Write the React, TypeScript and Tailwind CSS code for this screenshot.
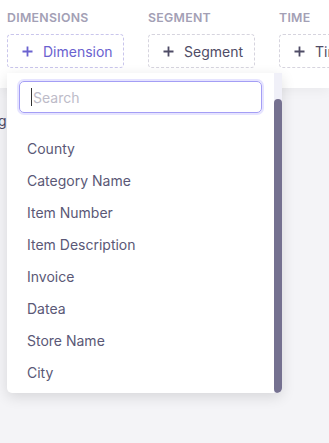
import React from "react";

const items = [
  "County",
  "Category Name",
  "Item Number",
  "Item Description",
  "Invoice",
  "Datea",
  "Store Name",
  "City",
];

function Plus({ className }: { className: string }) {
  return (
    <svg width="11" height="11" viewBox="0 0 11 11" className={className}>
      <path d="M5.5 0.5v10M0.5 5.5h10" stroke="currentColor" strokeWidth="1.8" fill="none" />
    </svg>
  );
}

export default function App() {
  return (
    <div
      className="relative w-[329px] h-[443px] overflow-hidden bg-[#f4f4f7]"
      style={{ fontFamily: "Inter, 'Noto Sans', sans-serif" }}
    >
      <div className="h-[88px] bg-white shadow-[0_4px_10px_rgba(0,0,0,0.04)] flex gap-[24px] pl-[7px] pt-[10px]">
        <div className="flex flex-col gap-[8px]">
          <div className="text-[12.3px] font-semibold text-[#a3a0b5] tracking-[0.3px] leading-[16px]">DIMENSIONS</div>
          <div className="h-[34px] w-[117px] border border-dashed border-[#c9c5ec] rounded-[4px] flex items-center pl-[14px] gap-[10px] text-[#6a62cf] text-[14px]">
            <Plus className="text-[#6a62cf]" />
            <span>Dimension</span>
          </div>
        </div>
        <div className="flex flex-col gap-[8px]">
          <div className="text-[12.3px] font-semibold text-[#a3a0b5] tracking-[0.3px] leading-[16px]">SEGMENT</div>
          <div className="h-[34px] w-[107px] border border-dashed border-[#d6d4de] rounded-[4px] flex items-center pl-[14px] gap-[10px] text-[#4f4c66] text-[14px]">
            <Plus className="text-[#4f4c66]" />
            <span>Segment</span>
          </div>
        </div>
        <div className="flex flex-col gap-[8px]">
          <div className="text-[12.3px] font-semibold text-[#a3a0b5] tracking-[0.3px] leading-[16px]">TIME</div>
          <div className="h-[34px] w-[90px] border border-dashed border-[#d6d4de] rounded-[4px] flex items-center pl-[14px] gap-[10px] text-[#4f4c66] text-[14px] whitespace-nowrap">
            <Plus className="text-[#4f4c66]" />
            <span>Time</span>
          </div>
        </div>
      </div>
      <div className="pt-[22px] text-[14px] text-[#4f4c66] -ml-[2px]">g</div>

      <div className="absolute left-[7px] top-[73px] w-[275px] h-[320px] bg-white rounded-b-[5px] shadow-[0_4px_14px_rgba(0,0,0,0.12)] flex overflow-hidden">
        <div className="flex-1 flex flex-col">
          <div className="pt-[8px] pl-[12px] pr-[12px]">
            <div className="h-[32px] w-[243px] rounded-[5px] border border-[#a49ef5] shadow-[0_0_0_2px_#e6e4ff] flex items-center pl-[11px] text-[14px] text-[#bdbbc8]">
              <span className="w-px h-[18px] bg-[#333] mr-[1px]" />
              <span>Search</span>
            </div>
          </div>
          <div className="flex flex-col pt-[19px] pl-[20px]">
            {items.map((it) => (
              <div key={it} className="h-[32px] flex items-center text-[14px] text-[#5a5876]">
                {it}
              </div>
            ))}
          </div>
        </div>
        <div className="w-[8px] flex flex-col bg-[#f0f0f8]">
          <div className="h-[26px]" />
          <div className="flex-1 bg-[#757190] rounded-[4px]" />
        </div>
      </div>
    </div>
  );
}
